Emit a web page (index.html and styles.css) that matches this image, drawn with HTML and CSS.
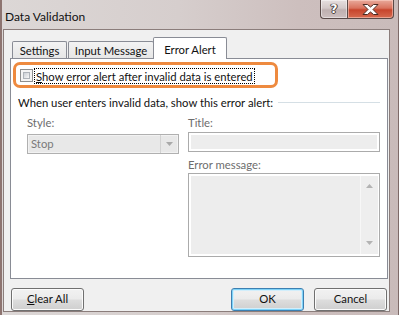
FILE: index.html
```html
<!DOCTYPE html>
<html>
<head>
<meta charset="utf-8">
<link rel="stylesheet" href="styles.css">
</head>
<body>
<div class="window">
  <div class="titlebar">
    <span class="title">Data Validation</span>
    <div class="caption">
      <div class="cbtn help"><span>?</span></div>
      <div class="cbtn close">
        <svg width="17" height="11" viewBox="0 0 17 11"><polygon points="1,0.5 5.5,0.5 8.5,3 11.5,0.5 16,0.5 11,5.5 16,10.5 11.5,10.5 8.5,8 5.5,10.5 1,10.5 6,5.5" fill="#fff" stroke="#4a2a22" stroke-width="1"/></svg>
      </div>
    </div>
  </div>
  <div class="client">
    <div class="tabs">
      <div class="tab t-settings">Settings</div>
      <div class="tab t-input">Input Message</div>
      <div class="tab active t-error">Error Alert</div>
    </div>
    <div class="pane">
      <div class="highlight">
        <span class="checkbox"><span class="cb-inner"></span></span>
        <span class="focus"><u>S</u>how error alert after invalid data is entered</span>
      </div>
      <div class="group-head">
        <span>When user enters invalid data, show this error alert:</span>
        <span class="rule"></span>
      </div>
      <div class="fields">
        <div class="col">
          <div class="label">Style:</div>
          <div class="select">
            <span class="sel-text">Stop</span>
            <span class="sel-btn"><svg width="7" height="4" viewBox="0 0 7 4"><polygon points="0,0 7,0 3.5,4" fill="#a9a9a9"/></svg></span>
          </div>
        </div>
        <div class="col">
          <div class="label">Title:</div>
          <div class="edit title-edit"><div class="fill"></div></div>
          <div class="label label-msg">Error message:</div>
          <div class="edit memo">
            <div class="fill"></div>
            <div class="scroll">
              <svg width="7" height="4" viewBox="0 0 7 4"><polygon points="0,4 7,4 3.5,0" fill="#b3b3b3"/></svg>
              <svg width="7" height="4" viewBox="0 0 7 4"><polygon points="0,0 7,0 3.5,4" fill="#b3b3b3"/></svg>
            </div>
          </div>
        </div>
      </div>
    </div>
    <div class="buttons">
      <div class="btn"><u>C</u>lear All</div>
      <div class="spacer"></div>
      <div class="btn default">OK</div>
      <div class="btn">Cancel</div>
    </div>
  </div>
</div>
</body>
</html>
```
FILE: styles.css
```css
html, body {
  margin: 0;
  padding: 0;
}
body {
  width: 399px;
  height: 315px;
  overflow: hidden;
  font-family: Lato, "Liberation Sans", sans-serif;
  font-size: 11.3px;
  color: #111;
}
.window {
  width: 399px;
  height: 315px;
  box-sizing: border-box;
  display: flex;
  flex-direction: column;
  padding: 0 8px 3px 3px;
  background: linear-gradient(to right, #8d7470 0, #8d7470 2px, #dcd7d6 2px, #d6cecd 45%, #cdbfbe 75%, #c9bbba 100%);
  border-right: 1px solid #7d6a68;
}
.titlebar {
  height: 29px;
  flex: none;
  display: flex;
  justify-content: space-between;
  align-items: flex-start;
}
.title {
  margin: 9px 0 0 2px;
  line-height: 15px;
  font-size: 12px;
}
.caption {
  display: flex;
  margin-right: -4px;
}
.cbtn {
  height: 19px;
  box-sizing: border-box;
  border: 1px solid #5a4a48;
  border-top: none;
  display: flex;
  align-items: center;
  justify-content: center;
}
.help {
  width: 27px;
  border-radius: 0 0 0 4px;
  border-right: none;
  background: linear-gradient(#e6dfdf, #d3c8c8 45%, #bfb0b0 55%, #cdbfbf);
  box-shadow: inset 0 0 0 1px rgba(255,255,255,0.45);
}
.help span {
  font-family: "DejaVu Sans", sans-serif;
  font-weight: bold;
  font-size: 12px;
  color: #fff;
  text-shadow: 0 0 1px #3c3030, 0 0 1px #3c3030, 1px 0 0 #5a4a4a, -1px 0 0 #5a4a4a, 0 1px 0 #5a4a4a;
  line-height: 12px;
}
.close {
  width: 47px;
  border-radius: 0 0 4px 0;
  background: linear-gradient(#e9aa9b, #d9735e 45%, #c7452c 55%, #d66a4f);
  box-shadow: inset 0 0 0 1px rgba(255,220,210,0.5);
}
.client {
  flex: 1;
  box-sizing: border-box;
  background: #f0f0f0;
  border: 1px solid #8b7d7b;
  padding: 7px 1px 0 6px;
  display: flex;
  flex-direction: column;
}
.tabs {
  display: flex;
  align-items: flex-end;
  height: 21px;
  flex: none;
  margin-left: 2px;
  position: relative;
  z-index: 1;
}
.tab {
  box-sizing: border-box;
  height: 17px;
  border: 1px solid #898c95;
  border-bottom: none;
  border-radius: 2px 2px 0 0;
  background: linear-gradient(#f3f3f3, #e6e6e6);
  padding-top: 1px;
  line-height: 15px;
  text-align: center;
}
.t-settings { width: 55px; }
.t-input { width: 86px; margin-left: 1px; }
.tab.active {
  width: 74px;
  height: 22px;
  margin-left: -1px;
  margin-bottom: -1px;
  padding-top: 4px;
  background: #fff;
}
.pane {
  flex: none;
  box-sizing: border-box;
  height: 221px;
  border: 1px solid #898c95;
  background: #fff;
  display: flex;
  flex-direction: column;
}
.highlight {
  margin: 3px 0 0 2px;
  width: 265px;
  height: 26px;
  box-sizing: border-box;
  border: 3px solid #ee8a3f;
  border-radius: 7px;
  display: flex;
  align-items: center;
  padding-left: 4px;
}
.checkbox {
  width: 13px;
  height: 13px;
  box-sizing: border-box;
  border: 1px solid #8e8f8f;
  background: #f4f4f4;
  padding: 2px;
  margin-right: 1px;
  display: flex;
}
.cb-inner {
  flex: 1;
  border: 1px solid #aeb3b9;
  background: linear-gradient(135deg, #cbcfd5, #f7f7f7);
}
.focus {
  border: 1px dotted #000;
  padding: 1px 1px 0 1px;
  line-height: 13px;
  margin-top: 1px;
}
.group-head {
  margin-top: 7px;
  padding: 0 7px;
  display: flex;
  align-items: center;
  line-height: 15px;
}
.rule {
  flex: 1;
  height: 1px;
  background: #d5dfe5;
  margin-left: 5px;
}
.fields {
  margin: 5px 0 0 16px;
  display: grid;
  grid-template-columns: 152px 192px;
  column-gap: 9px;
}
.label {
  line-height: 15px;
  color: #6d6d6d;
}
.select {
  margin-top: 4px;
  height: 20px;
  box-sizing: border-box;
  border: 1px solid #b0b0b0;
  background: #e8e8e8;
  display: flex;
  box-shadow: inset 0 0 0 1px #f2f2f2;
}
.sel-text {
  flex: 1;
  padding-left: 3px;
  line-height: 18px;
  color: #7a7a7a;
}
.sel-btn {
  width: 17px;
  border-left: 1px solid #d2d2d2;
  display: flex;
  align-items: center;
  justify-content: center;
}
.edit {
  box-sizing: border-box;
  border: 1px solid #ababab;
  background: #fff;
  padding: 2px;
  display: flex;
}
.title-edit {
  margin-top: 2px;
  height: 20px;
}
.fill {
  flex: 1;
  background: #ededed;
}
.label-msg {
  margin-top: 5px;
}
.memo {
  margin-top: 1px;
  height: 84px;
  padding: 2px 1px 2px 2px;
}
.scroll {
  width: 17px;
  background: #eeeeee;
  border-left: 1px solid #f7f7f7;
  display: flex;
  flex-direction: column;
  align-items: center;
  justify-content: space-between;
  padding: 8px 0 9px;
}
.buttons {
  margin: 9px 1px 0 1px;
  height: 23px;
  display: flex;
}
.spacer {
  flex: 1;
}
.btn {
  width: 73px;
  height: 23px;
  box-sizing: border-box;
  border: 1px solid #707070;
  border-radius: 3px;
  background: linear-gradient(#f2f2f2, #ebebeb 48%, #dddddd 52%, #cfcfcf);
  box-shadow: inset 0 0 0 1px #fbfbfb;
  text-align: center;
  line-height: 20px;
}
.btn.default {
  border-color: #3c7fb1;
  box-shadow: inset 0 0 0 1px #7fd3f8, inset 0 0 0 2px #d2eefb;
  margin-right: 10px;
}
```
